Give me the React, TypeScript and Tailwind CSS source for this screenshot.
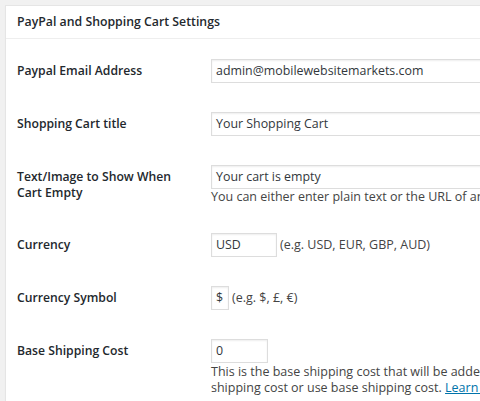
import React from "react";

const font = { fontFamily: '"Open Sans", "Noto Sans", sans-serif' };

function Field({ value, w }: { value: string; w: string }) {
  return (
    <div
      className={`h-[24px] ${w} shrink-0 border border-[#dddddd] bg-white shadow-[inset_0_1px_2px_rgba(0,0,0,0.07)] pl-[4px] flex items-center text-[12.4px] text-[#32373c] whitespace-nowrap overflow-hidden`}
    >
      {value}
    </div>
  );
}

function Row({ label, children }: { label: React.ReactNode; children: React.ReactNode }) {
  return (
    <div className="flex">
      <div className="w-[194px] shrink-0 pt-[4px] text-[12.2px] leading-[16px] font-semibold text-[#23282d]">
        {label}
      </div>
      <div className="flex flex-col">{children}</div>
    </div>
  );
}

export default function App() {
  return (
    <div className="w-[480px] h-[401px] overflow-hidden bg-[#f1f1f1] pt-[5px] pl-[5px]" style={font}>
      <div className="w-[700px] h-[500px] bg-white border border-[#e5e5e5] shadow-[0_1px_1px_rgba(0,0,0,0.04)]">
        <div className="h-[33px] border-b border-[#eeeeee] pl-[11px] flex items-center text-[12.3px] font-semibold text-[#23282d]">
          PayPal and Shopping Cart Settings
        </div>
        <div className="pl-[11px] pt-[20px] flex flex-col gap-[29px]">
          <Row label="Paypal Email Address">
            <Field value="admin@mobilewebsitemarkets.com" w="w-[400px]" />
          </Row>
          <Row label="Shopping Cart title">
            <Field value="Your Shopping Cart" w="w-[400px]" />
          </Row>
          <Row label={<>Text/Image to Show When<br />Cart Empty</>}>
            <Field value="Your cart is empty" w="w-[400px]" />
            <div className="text-[12.5px] leading-[15px] text-[#444444] whitespace-nowrap">
              You can either enter plain text or the URL of an image that you want to show when the shopping cart is empty
            </div>
          </Row>
          <Row label="Currency">
            <div className="flex items-center">
              <Field value="USD" w="w-[66px]" />
              <span className="ml-[3px] text-[12.5px] text-[#444444]">(e.g. USD, EUR, GBP, AUD)</span>
            </div>
          </Row>
          <Row label="Currency Symbol">
            <div className="flex items-center">
              <Field value="$" w="w-[18px]" />
              <span className="ml-[3px] text-[12.5px] text-[#444444]">(e.g. $, £, €)</span>
            </div>
          </Row>
          <Row label="Base Shipping Cost">
            <Field value="0" w="w-[57px]" />
            <div className="pt-[1px] text-[12.5px] leading-[16px] text-[#444444] whitespace-nowrap">
              This is the base shipping cost that will be added to the total of individual products shipping cost. Put 0 if you do not want to charge
              <br />
              shipping cost or use base shipping cost.{" "}
              <a className="text-[#0073aa] underline" href="#">Learn More on Shipping Calculation</a>
            </div>
          </Row>
        </div>
      </div>
    </div>
  );
}
